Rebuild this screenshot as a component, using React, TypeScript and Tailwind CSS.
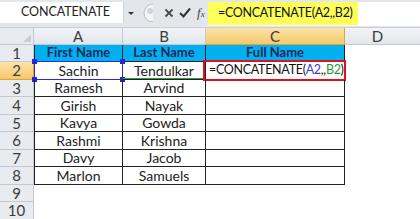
import React from "react";

const font = { fontFamily: "Lato, 'Open Sans', 'Liberation Sans', sans-serif" };

const rows = [
  ["Sachin", "Tendulkar"],
  ["Ramesh", "Arvind"],
  ["Girish", "Nayak"],
  ["Kavya", "Gowda"],
  ["Rashmi", "Krishna"],
  ["Davy", "Jacob"],
  ["Marlon", "Samuels"],
];

function RowHead({ n, active }: { n: number; active?: boolean }) {
  return (
    <div
      className={
        "w-[34px] shrink-0 flex items-center justify-center text-[15px] text-[#3c3c3c] border-r border-b " +
        (active
          ? "bg-gradient-to-b from-[#fbe3a8] to-[#f6c96a] border-[#d9a640]"
          : "bg-[#e8ebf0] border-[#c3c9d2]")
      }
    >
      {n}
    </div>
  );
}

function Handle({ pos }: { pos: string }) {
  return <div className={"absolute w-[5px] h-[5px] bg-[#2626d9] " + pos} />;
}

export default function App() {
  return (
    <div className="w-[420px] h-[219px] bg-white overflow-hidden" style={font}>
      {/* Formula bar */}
      <div className="h-[28px] bg-[#e3e6eb] flex items-start pt-[2px] border-b border-[#c9ced6]">
        <div className="w-[124px] h-[21px] bg-white flex items-center pl-[21px] text-[12.5px] tracking-[-0.1px] text-[#222] border-r border-[#d0d4da]">
          CONCATENATE
        </div>
        <div className="w-[84px] h-[21px] flex items-center">
          <svg width="10" height="10" viewBox="0 0 10 10" className="ml-[2px]">
            <path d="M2 4 L8 4 L5 7 Z" fill="#333" />
          </svg>
          <svg width="16" height="20" viewBox="0 0 16 20" className="ml-[3px]">
            <path d="M14 1 A9 9 0 0 0 14 19" fill="#f4f5f7" stroke="#b9bec6" strokeWidth="1" />
            <circle cx="11" cy="8" r="3" fill="#d2d6dc" />
          </svg>
          <svg width="10" height="10" viewBox="0 0 10 10" className="ml-[9px]">
            <path d="M1.5 1.5 L8.5 8.5 M8.5 1.5 L1.5 8.5" stroke="#4a4a4a" strokeWidth="1.8" />
          </svg>
          <svg width="12" height="11" viewBox="0 0 12 11" className="ml-[5px]">
            <path d="M1 6 L4.5 9.5 L11 1.5" stroke="#333" strokeWidth="2" fill="none" />
          </svg>
          <span
            className="ml-[6px] text-[13px] italic text-[#444]"
            style={{ fontFamily: "'Liberation Serif', serif" }}
          >
            f<span className="text-[9px]">x</span>
          </span>
        </div>
        <div className="flex-1 h-[24px] bg-white flex items-start">
          <div className="w-[150px] h-[23px] bg-[#ffff5a] flex items-center pl-[10px] text-[12.5px] tracking-[-0.3px] text-[#111]">
            =CONCATENATE(A2,,B2)
          </div>
        </div>
      </div>

      {/* Column headers */}
      <div className="h-[17px] flex text-[15px] text-[#3c3c3c]">
        <div className="w-[34px] shrink-0 bg-[#e8ebf0] border-r border-b border-[#c3c9d2] flex items-end justify-end p-[2px]">
          <svg width="8" height="8" viewBox="0 0 8 8">
            <path d="M8 0 L8 8 L0 8 Z" fill="#c9ced6" />
          </svg>
        </div>
        <div className="w-[89px] shrink-0 bg-gradient-to-b from-[#f2f4f7] to-[#e2e6ec] border-r border-b border-[#c3c9d2] flex items-center justify-center">A</div>
        <div className="w-[83px] shrink-0 bg-gradient-to-b from-[#f2f4f7] to-[#e2e6ec] border-r border-b border-[#c3c9d2] flex items-center justify-center">B</div>
        <div className="w-[139px] shrink-0 bg-gradient-to-b from-[#fbe3a8] to-[#f6c96a] border-r border-b border-[#d9a640] flex items-center justify-center">C</div>
        <div className="flex-1 bg-gradient-to-b from-[#f2f4f7] to-[#e2e6ec] border-b border-[#c3c9d2] flex items-center justify-center pr-[10px]">D</div>
      </div>

      {/* Row 1 */}
      <div className="h-[17px] flex">
        <RowHead n={1} />
        <div className="w-[89px] shrink-0 bg-[#00b0f0] border-l border-r border-b border-[#222] flex items-center justify-center text-[13px] font-bold text-[#1a2a55]">First Name</div>
        <div className="w-[83px] shrink-0 bg-[#00b0f0] border-r border-b border-[#222] flex items-center justify-center text-[13px] font-bold text-[#1a2a55]">Last Name</div>
        <div className="w-[139px] shrink-0 bg-[#00b0f0] border-r border-b border-[#222] flex items-center justify-center text-[13px] font-bold text-[#1a2a55]">Full Name</div>
        <div className="flex-1" />
      </div>

      {/* Data rows */}
      {rows.map((r, i) => {
        const n = i + 2;
        const first = n === 2;
        return (
          <div key={n} className="h-[17.5px] flex">
            <RowHead n={n} active={first} />
            <div className="relative w-[89px] shrink-0 border-l border-r border-b border-[#222] flex items-center justify-center text-[14px] text-[#222]">
              {r[0]}
              {first && (
                <>
                  <div className="absolute inset-[-1px] border border-[#2b2bd6]" />
                  <Handle pos="-left-[3px] -top-[3px]" />
                  <Handle pos="-right-[3px] -top-[3px]" />
                  <Handle pos="-left-[3px] -bottom-[3px]" />
                  <Handle pos="-right-[3px] -bottom-[3px]" />
                </>
              )}
            </div>
            <div className="relative w-[83px] shrink-0 border-r border-b border-[#222] flex items-center justify-center text-[14px] text-[#222]">
              {r[1]}
              {first && <div className="absolute inset-0 border-b border-r border-[#2f9a3a]" />}
            </div>
            <div className="relative w-[139px] shrink-0 border-r border-b border-[#222] flex items-center text-[12.5px] tracking-[-0.3px] text-[#111]">
              {first && (
                <>
                  <span className="pl-[3px] whitespace-nowrap">
                    =CONCATENATE(<span className="text-[#3b3bd8]">A2</span>,,<span className="text-[#2f9a3a]">B2</span>)
                  </span>
                  <div className="absolute -left-[3px] -top-[2px] -right-[2px] -bottom-[2px] border-[2px] border-[#e0101c]" />
                </>
              )}
            </div>
            <div className="flex-1" />
          </div>
        );
      })}

      {[9, 10].map((n) => (
        <div key={n} className="h-[17.5px] flex">
          <RowHead n={n} />
          <div className="flex-1" />
        </div>
      ))}
    </div>
  );
}
